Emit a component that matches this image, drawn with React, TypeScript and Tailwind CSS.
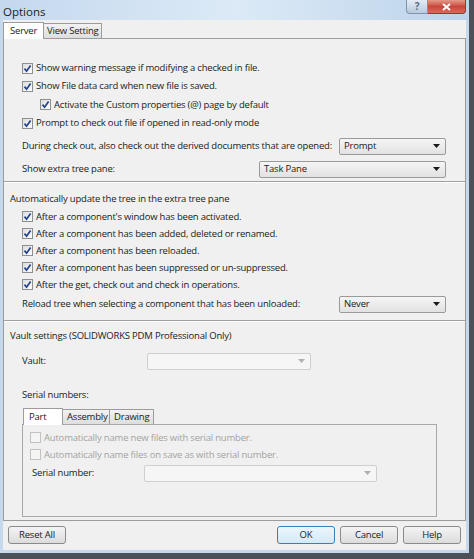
import React from "react";

const Check = ({ checked = true, disabled = false }: { checked?: boolean; disabled?: boolean }) => (
  <span
    className={`w-[11px] h-[11px] border flex items-center justify-center shrink-0 ${
      disabled ? "border-[#c2c2c2] bg-[#f4f4f4]" : "border-[#8e8f8f] bg-linear-to-br from-[#dcdcdc] to-white"
    }`}
  >
    {checked && (
      <svg width="9" height="9" viewBox="0 0 9 9">
        <path d="M1.5 4.6 L3.6 7.2 L7.6 1.4" stroke="#21418b" strokeWidth="1.7" fill="none" />
      </svg>
    )}
  </span>
);

const Select = ({ text = "", disabled = false, className = "" }: { text?: string; disabled?: boolean; className?: string }) => (
  <div
    className={`h-[17px] border rounded-[2px] flex items-center justify-between pl-[4px] pr-[5px] shrink-0 ${
      disabled ? "border-[#cfcfcf] bg-[#f6f6f6]" : "border-[#9a9a9a] bg-linear-to-b from-[#f5f5f5] to-[#e2e2e2]"
    } ${className}`}
  >
    <span>{text}</span>
    <svg width="7" height="4" viewBox="0 0 7 4">
      <path d="M0 0 H7 L3.5 4 Z" fill={disabled ? "#b0b0b0" : "#1a1a1a"} />
    </svg>
  </div>
);

const CheckRow = ({ label, className = "", disabled = false, checked = true }: { label: string; className?: string; disabled?: boolean; checked?: boolean }) => (
  <div className={`flex items-center gap-[3px] ${className}`}>
    <Check checked={checked} disabled={disabled} />
    <span className={disabled ? "text-[#a3a3a3]" : ""}>{label}</span>
  </div>
);

const Button = ({ label, primary = false }: { label: string; primary?: boolean }) => (
  <div
    className={`w-[58px] h-[18px] rounded-[3px] border flex items-center justify-center ${
      primary
        ? "border-[#3c7fb1] bg-linear-to-b from-[#eaf6fd] to-[#d4e9f7]"
        : "border-[#8a8a8a] bg-linear-to-b from-[#f4f4f4] to-[#dcdcdc]"
    }`}
  >
    {label}
  </div>
);

const Separator = () => <div className="border-t border-[#a0a0a0] border-b border-b-white" />;

export default function App() {
  return (
    <div className="w-[474px] h-[559px] bg-[#4b5059] overflow-hidden text-[#1b1b1b] text-[9.5px] tracking-[-0.2px] whitespace-nowrap font-['Open_Sans',sans-serif]">
      <div className="w-[469px] h-[553px] bg-[#c6d8ec] flex flex-col">
        {/* Title bar */}
        <div className="h-[21px] flex items-start bg-linear-to-r from-[#c4d8ee] via-[#dceaf7] to-[#bcd3ea]">
          <div className="pl-[3px] pt-[3px] text-[11.5px] tracking-normal text-[#222]">Options</div>
          <div className="ml-auto flex mr-[3px]">
            <div className="w-[22px] h-[14px] rounded-bl-[4px] border border-t-0 border-[#7f93aa] bg-linear-to-b from-[#e3ecf5] to-[#b9cadd] flex items-center justify-center text-[10px] text-[#5a6b80] font-bold">
              ?
            </div>
            <div className="w-[38px] h-[14px] rounded-br-[4px] border border-t-0 border-l-0 border-[#8c3a35] bg-linear-to-b from-[#e39a8a] via-[#c9463b] to-[#d46d58] flex items-center justify-center">
              <svg width="9" height="8" viewBox="0 0 9 8">
                <path d="M1 1 L8 7 M8 1 L1 7" stroke="white" strokeWidth="2" />
              </svg>
            </div>
          </div>
        </div>

        {/* Body */}
        <div className="flex-1 mx-[3px] mb-[3px] bg-[#f0f0f0] flex flex-col">
          {/* Tabs */}
          <div className="flex items-end h-[18px] pt-[1px]">
            <div className="w-[41px] h-[17px] bg-white border border-b-0 border-[#9c9c9c] flex items-center pl-[6px] -mb-px relative z-10">
              Server
            </div>
            <div className="w-[58px] h-[15px] border border-l-0 border-b-0 border-[#9c9c9c] bg-linear-to-b from-[#f2f2f2] to-[#dedede] flex items-center pl-[3px]">
              View Setting
            </div>
          </div>

          <div className="h-[483px] border border-[#9c9c9c] flex flex-col">
            {/* Section 1 */}
            <div className="pl-[18px] pr-[19px] pt-[20px] h-[142px]">
              <CheckRow className="h-[18px]" label="Show warning message if modifying a checked in file." />
              <CheckRow className="h-[18px]" label="Show File data card when new file is saved." />
              <CheckRow className="h-[19px] pl-[18px]" label="Activate the Custom properties (@) page by default" />
              <CheckRow className="h-[18px]" label="Prompt to check out file if opened in read-only mode" />
              <div className="h-[22px] mt-[3px] flex items-center justify-between">
                <span>During check out, also check out the derived documents that are opened:</span>
                <Select text="Prompt" className="w-[107px]" />
              </div>
              <div className="h-[24px] flex items-center justify-between">
                <span>Show extra tree pane:</span>
                <Select text="Task Pane" className="w-[187px]" />
              </div>
            </div>
            <Separator />

            {/* Section 2 */}
            <div className="pl-[6px] pr-[19px] pt-[7px] h-[137px]">
              <div className="h-[18px] flex items-center">Automatically update the tree in the extra tree pane</div>
              <div className="pl-[12px]">
                <CheckRow className="h-[17px]" label="After a component's window has been activated." />
                <CheckRow className="h-[17px]" label="After a component has been added, deleted or renamed." />
                <CheckRow className="h-[17px]" label="After a component has been reloaded." />
                <CheckRow className="h-[17px]" label="After a component has been suppressed or un-suppressed." />
                <CheckRow className="h-[17px]" label="After the get, check out and check in operations." />
                <div className="h-[22px] flex items-center justify-between">
                  <span>Reload tree when selecting a component that has been unloaded:</span>
                  <Select text="Never" className="w-[107px]" />
                </div>
              </div>
            </div>
            <Separator />

            {/* Section 3 */}
            <div className="pl-[6px] pt-[5px] flex-1 flex flex-col">
              <div className="h-[18px] flex items-center">Vault settings (SOLIDWORKS PDM Professional Only)</div>
              <div className="pl-[12px] mt-[6px] h-[20px] flex items-center">
                <span className="w-[125px]">Vault:</span>
                <Select disabled className="w-[164px]" />
              </div>
              <div className="pl-[12px] mt-[15px] h-[18px] flex items-center">Serial numbers:</div>
              <div className="ml-[12px] mt-[3px] w-[415px]">
                <div className="flex items-end h-[17px] pl-[1px]">
                  <div className="w-[40px] h-[17px] bg-white border border-b-0 border-[#9c9c9c] pl-[5px] flex items-center -mb-px relative z-10">
                    Part
                  </div>
                  <div className="w-[47px] h-[15px] border border-l-0 border-b-0 border-[#9c9c9c] bg-linear-to-b from-[#f2f2f2] to-[#dedede] pl-[4px] flex items-center">
                    Assembly
                  </div>
                  <div className="w-[44px] h-[15px] border border-l-0 border-b-0 border-[#9c9c9c] bg-linear-to-b from-[#f2f2f2] to-[#dedede] pl-[4px] flex items-center">
                    Drawing
                  </div>
                </div>
                <div className="h-[93px] border border-[#a8a8a8] pl-[7px] pt-[4px]">
                  <CheckRow disabled checked={false} className="h-[17px]" label="Automatically name new files with serial number." />
                  <CheckRow disabled checked={false} className="h-[17px]" label="Automatically name files on save as with serial number." />
                  <div className="h-[20px] flex items-center pl-[2px]">
                    <span className="w-[112px]">Serial number:</span>
                    <Select disabled className="w-[233px]" />
                  </div>
                </div>
              </div>
            </div>
          </div>

          {/* Buttons */}
          <div className="flex items-center h-[29px] pl-[5px] pr-[5px] pb-[1px]">
            <Button label="Reset All" />
            <div className="ml-auto flex gap-[5px]">
              <Button label="OK" primary />
              <Button label="Cancel" />
              <Button label="Help" />
            </div>
          </div>
        </div>
      </div>
    </div>
  );
}
